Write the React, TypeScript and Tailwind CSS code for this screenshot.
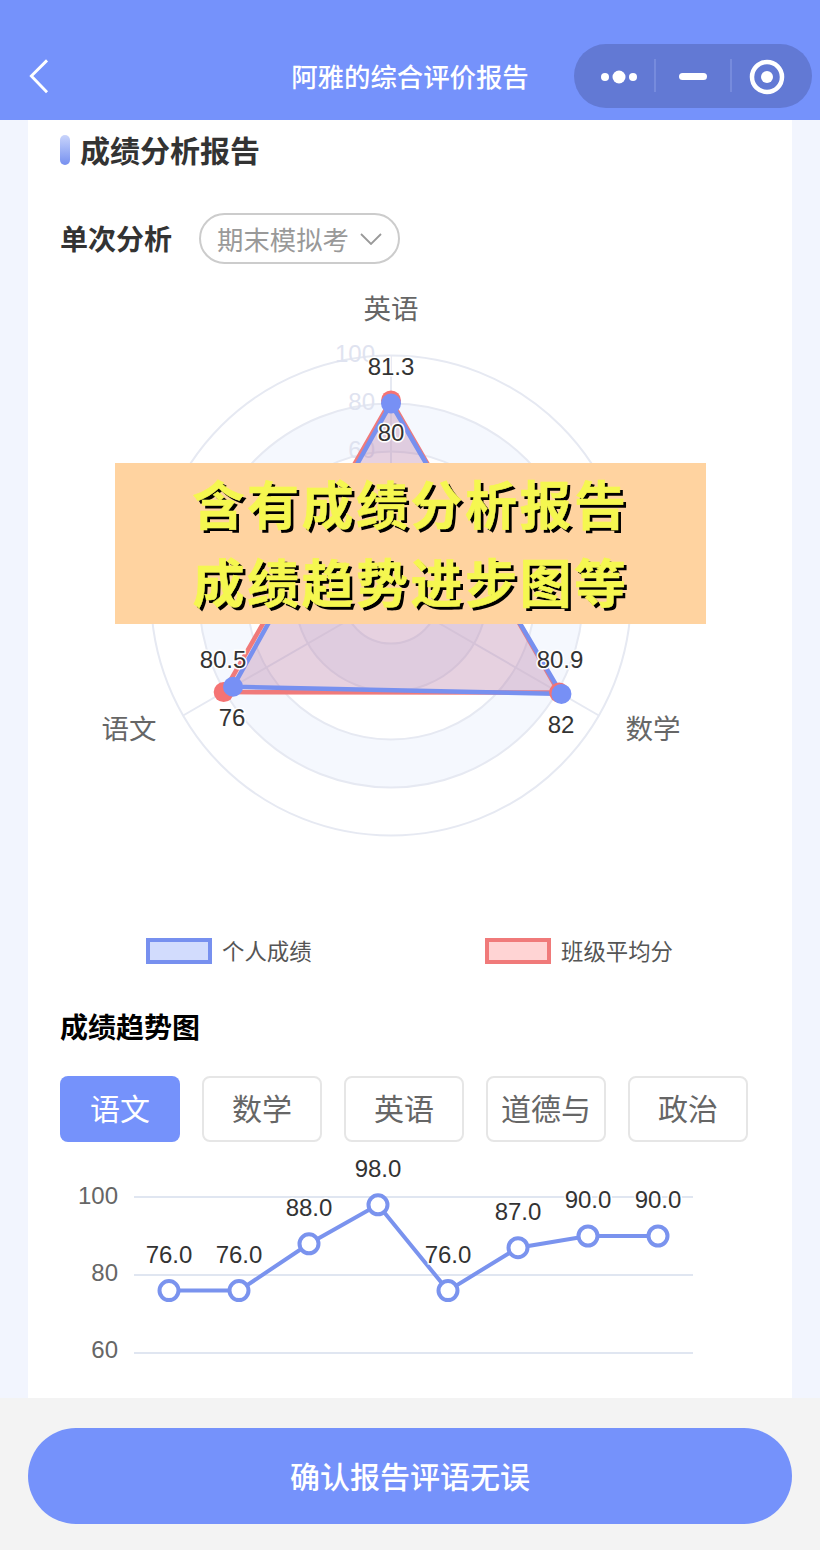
const CJK = "font-['Noto_Sans_CJK_SC','Noto_Sans',sans-serif]";

const TABS = ["语文", "数学", "英语", "道德与", "政治"];

const RINGS = [240, 192, 144, 96, 48];
const CX = 391;
const CY = 595.5;

// value -> point on one of the three radar axes, 100 = outer ring
function radarPoint(value: number, axis: number) {
  const r = value * 2.4;
  const angle = (-90 + axis * 120) * (Math.PI / 180);
  return { x: CX + r * Math.cos(angle), y: CY + r * Math.sin(angle) };
}

const BLUE = [80, 82, 76].map((v, i) => radarPoint(v, i));
const RED = [81.3, 80.9, 80.5].map((v, i) => radarPoint(v, i));
const toPoints = (list: { x: number; y: number }[]) => list.map((p) => `${p.x},${p.y}`).join(" ");

const TREND = [
  { x: 169, v: 76 },
  { x: 239, v: 76 },
  { x: 309, v: 88 },
  { x: 378, v: 98 },
  { x: 448, v: 76 },
  { x: 518, v: 87 },
  { x: 588, v: 90 },
  { x: 658, v: 90 },
];
const trendY = (v: number) => 1353 - (v - 60) * 3.9;

function RadarChart() {
  return (
    <svg viewBox="28 280 764 640" className="block w-[764px] h-[640px] mt-[16px] -ml-[32px] font-['Liberation_Sans',sans-serif]">
      <path
        d={`M${CX},${CY - 192}a192,192 0 1,0 0.01,0zM${CX},${CY - 144}a144,144 0 1,1 -0.01,0z`}
        fill="#f5f8fe"
        fillRule="evenodd"
      />
      <path
        d={`M${CX},${CY - 96}a96,96 0 1,0 0.01,0zM${CX},${CY - 48}a48,48 0 1,1 -0.01,0z`}
        fill="#f5f8fe"
        fillRule="evenodd"
      />
      {RINGS.map((r) => (
        <circle key={r} cx={CX} cy={CY} r={r} fill="none" stroke="#e6e9f2" strokeWidth="2" />
      ))}
      {[0, 1, 2].map((i) => {
        const end = radarPoint(100, i);
        return <line key={i} x1={CX} y1={CY} x2={end.x} y2={end.y} stroke="#e6e9f2" strokeWidth="2" />;
      })}
      <g fill="#dfe3f0" fontSize="24" textAnchor="end">
        <text x="375" y="362">100</text>
        <text x="375" y="410">80</text>
        <text x="375" y="458">60</text>
      </g>
      <polygon points={toPoints(RED)} fill="#f06a6a" fillOpacity="0.22" stroke="#f07a7a" strokeWidth="4.5" />
      <polygon points={toPoints(BLUE)} fill="#7790ef" fillOpacity="0.16" stroke="#7790ef" strokeWidth="4.5" />
      {RED.map((p, i) => (
        <circle key={i} cx={p.x} cy={p.y} r="10" fill="#f57373" />
      ))}
      {BLUE.map((p, i) => (
        <circle key={i} cx={p.x} cy={p.y} r="10" fill="#7790f5" />
      ))}
      <g
        fill="#333333"
        fontSize="24"
        textAnchor="middle"
        stroke="#ffffff"
        strokeWidth="3"
        paintOrder="stroke"
      >
        <text x="391" y="375">81.3</text>
        <text x="391" y="441">80</text>
        <text x="223" y="668">80.5</text>
        <text x="560" y="668">80.9</text>
        <text x="232" y="726">76</text>
        <text x="561" y="733">82</text>
      </g>
      <g fill="#666666" fontSize="27.5" textAnchor="middle" fontFamily="'Noto Sans CJK SC', sans-serif">
        <text x="391" y="319">英语</text>
        <text x="129" y="739">语文</text>
        <text x="653" y="739">数学</text>
      </g>
    </svg>
  );
}

function TrendChart() {
  return (
    <svg viewBox="28 1142 764 256" className="block w-[764px] h-[256px] -ml-[32px] font-['Liberation_Sans',sans-serif]">
      {[
        { y: 1197, label: "100", base: 1204 },
        { y: 1275, label: "80", base: 1281 },
        { y: 1353, label: "60", base: 1358 },
      ].map((g) => (
        <g key={g.y}>
          <line x1="134" x2="693" y1={g.y} y2={g.y} stroke="#e0e6f1" strokeWidth="2" />
          <text x="118" y={g.base} textAnchor="end" fontSize="24" fill="#666666">{g.label}</text>
        </g>
      ))}
      <polyline
        points={TREND.map((p) => `${p.x},${trendY(p.v)}`).join(" ")}
        fill="none"
        stroke="#7a93ee"
        strokeWidth="4"
      />
      {TREND.map((p) => (
        <circle key={p.x} cx={p.x} cy={trendY(p.v)} r="9.5" fill="#ffffff" stroke="#7a93ee" strokeWidth="4" />
      ))}
      {TREND.map((p) => (
        <text
          key={p.x}
          x={p.x}
          y={trendY(p.v) - 28}
          textAnchor="middle"
          fontSize="24"
          fill="#333333"
          stroke="#ffffff"
          strokeWidth="3"
          paintOrder="stroke"
        >
          {p.v.toFixed(1)}
        </text>
      ))}
    </svg>
  );
}

export default function App() {
  return (
    <div className={`relative w-[820px] h-[1550px] flex flex-col overflow-hidden bg-[#f2f5fe] ${CJK}`}>
      <header className="relative h-[120px] shrink-0 bg-[#7592fb] flex items-end justify-center pb-[24px]">
        <svg viewBox="0 0 24 40" className="absolute left-[26px] top-[58px] w-[24px] h-[38px]" fill="none">
          <path d="M21.5 2.5 5 19l16.5 17" stroke="#ffffff" strokeWidth="3" />
        </svg>
        <h1 className="text-[26.4px] leading-[40px] font-medium text-white">阿雅的综合评价报告</h1>
        <svg viewBox="0 0 238 64" className="absolute left-[574px] top-[44px] w-[238px] h-[64px]">
          <rect width="238" height="64" rx="32" fill="#6279d4" />
          <circle cx="31" cy="33" r="4" fill="#ffffff" />
          <circle cx="45" cy="33" r="6.5" fill="#ffffff" />
          <circle cx="59" cy="33" r="4" fill="#ffffff" />
          <line x1="81" x2="81" y1="15" y2="48" stroke="#7e92e0" strokeWidth="1.5" />
          <rect x="105" y="29" width="28" height="7" rx="3.5" fill="#ffffff" />
          <line x1="157" x2="157" y1="15" y2="48" stroke="#7e92e0" strokeWidth="1.5" />
          <circle cx="193" cy="33" r="15" fill="none" stroke="#ffffff" strokeWidth="4.5" />
          <circle cx="193" cy="33" r="6" fill="#ffffff" />
        </svg>
      </header>

      <main className="flex-1 min-h-0 mx-[28px] px-[32px] bg-white overflow-hidden">
        <div className="mt-[10px] h-[40px] flex items-center gap-[10px]">
          <span className="w-[10px] h-[30px] rounded-[5px] bg-gradient-to-b from-[#c9d4fb] to-[#7790ef]" />
          <h2 className="pb-[2px] text-[30px] leading-[40px] font-bold text-[#333333]">成绩分析报告</h2>
        </div>

        <div className="mt-[43px] flex items-center">
          <span className="w-[139px] pb-[2px] text-[28px] leading-[40px] font-bold text-[#333333]">单次分析</span>
          <div className="w-[201px] h-[51px] rounded-full border-2 border-[#cccccc] flex items-center pl-[16px] gap-[11px]">
            <span className="text-[26.4px] leading-[36px] text-[#999999]">期末模拟考</span>
            <svg viewBox="0 0 22 12" className="w-[22px] h-[12px]" fill="none">
              <path d="M1 1l10 10L21 1" stroke="#999999" strokeWidth="1.8" />
            </svg>
          </div>
        </div>

        <RadarChart />

        <div className="mt-[18px] h-[26px] flex items-center text-[22.4px] leading-[26px] text-[#555555]">
          <span className="ml-[86px] w-[66px] h-[26px] border-4 border-[#7790ef] bg-[#d2dcfd]" />
          <span className="ml-[10px] w-[263px] pb-[2px]">个人成绩</span>
          <span className="w-[66px] h-[26px] border-4 border-[#f07a7a] bg-[#ffd4d4]" />
          <span className="ml-[10px] pb-[2px]">班级平均分</span>
        </div>

        <h3 className="mt-[42px] text-[28px] leading-[40px] font-bold text-black">成绩趋势图</h3>

        <div className="mt-[30px] flex gap-[22px]">
          {TABS.map((tab, i) => (
            <div
              key={tab}
              className={`w-[120px] h-[66px] shrink-0 rounded-[8px] pb-[4px] flex items-center justify-center text-[30px] leading-[40px] ${
                i === 0 ? "bg-[#7592fb] text-white" : "border-2 border-[#e6e6e6] text-[#666666]"
              }`}
            >
              {tab}
            </div>
          ))}
        </div>

        <TrendChart />
      </main>

      <footer className="h-[152px] shrink-0 bg-[#f3f3f3] px-[28px] pt-[30px]">
        <div className="h-[96px] rounded-full bg-[#7592fb] pb-[2px] flex items-center justify-center text-[30px] font-medium text-white">
          确认报告评语无误
        </div>
      </footer>

      <div className="absolute left-[115px] top-[463px] w-[591px] h-[161px] bg-[#ffd3a0] pb-[4px] flex flex-col items-center justify-center text-[52px] leading-[78px] font-bold tracking-[2.5px] text-[#f5f750] [-webkit-text-stroke:0.5px_#f5f750] [text-shadow:3px_3px_0_#000000]">
        <div>含有成绩分析报告</div>
        <div>成绩趋势进步图等</div>
      </div>
    </div>
  );
}
